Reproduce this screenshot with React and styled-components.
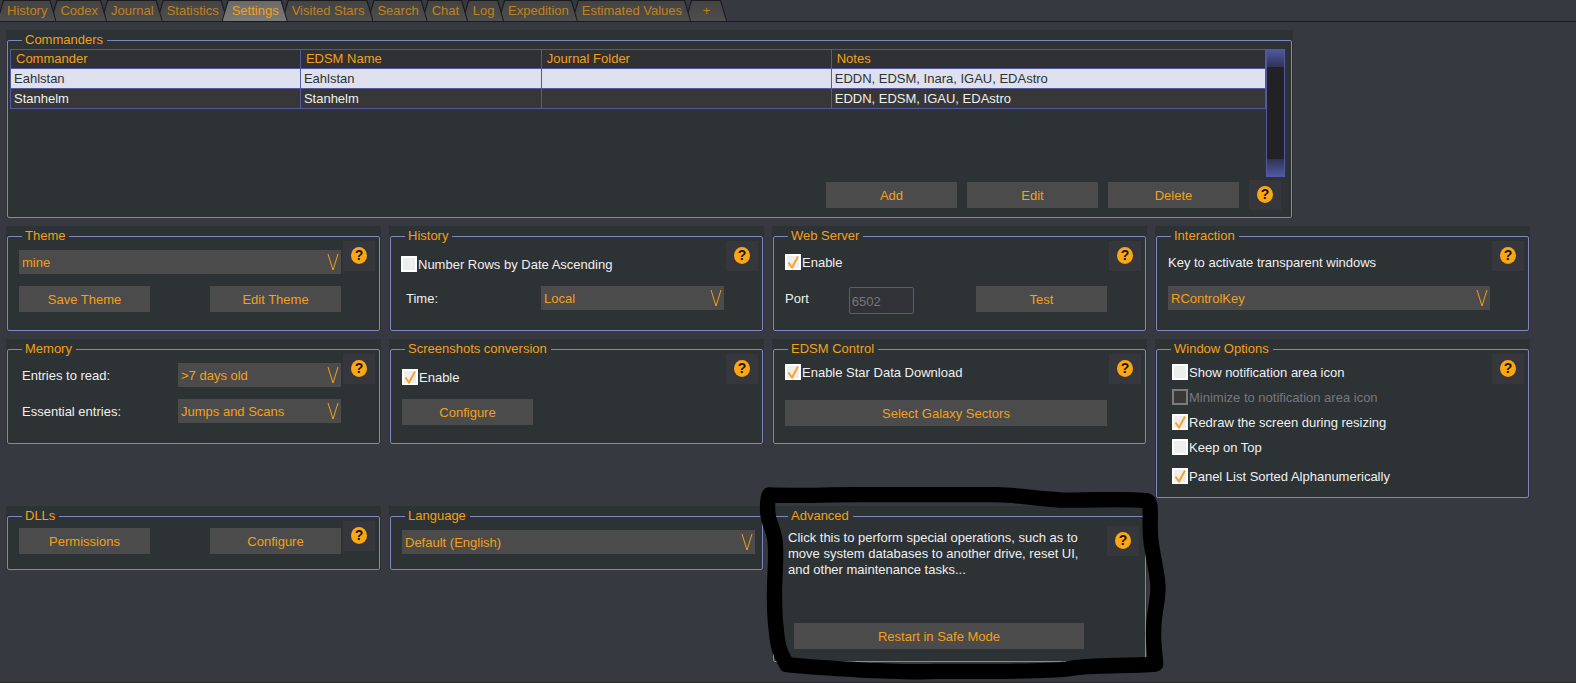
import { useState } from 'react'
import styled, { createGlobalStyle, css } from 'styled-components'

const Colors = {
    page: '#373940',
    panel: '#2d3235',
    line: '#7f87bd',
    grid: '#5359a0',
    button: '#4b4b4b',
    orange: '#f3a018',
    tabText: '#c1811a',
    white: '#f0f0f0',
    disabled: '#78787a',
}

const tabs = ['History', 'Codex', 'Journal', 'Statistics', 'Settings', 'Visited Stars', 'Search', 'Chat', 'Log', 'Expedition', 'Estimated Values', '+']

const commanders = [
    { name: 'Eahlstan', edsm: 'Eahlstan', folder: '', notes: 'EDDN, EDSM, Inara, IGAU, EDAstro' },
    { name: 'Stanhelm', edsm: 'Stanhelm', folder: '', notes: 'EDDN, EDSM, IGAU, EDAstro' },
]

const Help = ({ topic }) => (
    <HelpButton type="button" aria-label={`Help: ${topic}`}>
        <HelpMark>?</HelpMark>
    </HelpButton>
)

const Select = ({ id, label, value, width }) => (
    <SelectBox $width={width}>
        <StyledSelect id={id} aria-label={label} defaultValue={value}>
            <option>{value}</option>
        </StyledSelect>
        <Caret viewBox="0 0 12 18" aria-hidden="true">
            <path d="M1 1 L6 17 L11 1" />
        </Caret>
    </SelectBox>
)

const Check = ({ children, checked = false, disabled = false }) => {
    const [on, setOn] = useState(checked)

    return (
        <CheckLabel $disabled={disabled}>
            <CheckMark>
                <CheckInput type="checkbox" checked={on} disabled={disabled} onChange={() => setOn(!on)} />
                {on && (
                    <Tick viewBox="0 0 16 16" aria-hidden="true">
                        <path d="M3.5 8.5 L7 13.5 L13 2.5" />
                    </Tick>
                )}
            </CheckMark>
            <CheckText>{children}</CheckText>
        </CheckLabel>
    )
}

const Group = ({ title, help = true, top, gap, left, right, bottom, children }) => (
    <Panel>
        <Fieldset>
            <Legend>{title}</Legend>
            <Body>
                <Rows $top={top} $gap={gap} $left={left} $right={right} $bottom={bottom}>{children}</Rows>
                {help && <Help topic={title} />}
            </Body>
        </Fieldset>
    </Panel>
)

const Commanders = () => (
    <CommandersPanel>
        <Fieldset>
            <Legend>Commanders</Legend>
            <ListArea>
                <ListScroll>
                    <Table>
                        <colgroup>
                            <Col $width="23.1%" />
                            <Col $width="19.2%" />
                            <Col $width="23.1%" />
                            <Col />
                        </colgroup>
                        <thead>
                            <tr>
                                <Th>Commander</Th>
                                <Th>EDSM Name</Th>
                                <Th>Journal Folder</Th>
                                <Th>Notes</Th>
                            </tr>
                        </thead>
                        <tbody>
                            {commanders.map((c, i) => (
                                <Tr key={c.name} $selected={i === 0}>
                                    <Td>{c.name}</Td>
                                    <Td>{c.edsm}</Td>
                                    <Td>{c.folder}</Td>
                                    <Td>{c.notes}</Td>
                                </Tr>
                            ))}
                        </tbody>
                    </Table>
                </ListScroll>
                <ScrollBar>
                    <ScrollEnd $up />
                    <ScrollEnd />
                </ScrollBar>
            </ListArea>
            <Actions>
                <Button>Add</Button>
                <Button>Edit</Button>
                <Button>Delete</Button>
                <Help topic="Commanders" />
            </Actions>
        </Fieldset>
    </CommandersPanel>
)

const App = () => {
    const [active, setActive] = useState('Settings')

    return (
        <Page>
            <GlobalStyle />
            <TabStrip role="tablist">
                {tabs.map((name, i) => (
                    <Tab
                        key={name}
                        type="button"
                        role="tab"
                        aria-selected={name === active}
                        $active={name === active}
                        $order={tabs.length - i}
                        onClick={() => setActive(name)}
                    >
                        <span>{name}</span>
                    </Tab>
                ))}
            </TabStrip>

            <Content>
                <Commanders />

                <Groups>
                    <Group title="Theme">
                        <Select label="Theme" value="mine" />
                        <Row>
                            <Button>Save Theme</Button>
                            <Button>Edit Theme</Button>
                        </Row>
                    </Group>

                    <Group title="History" top={11} gap={10} left={10}>
                        <Row $short><Check>Number Rows by Date Ascending</Check></Row>
                        <Row>
                            <Label htmlFor="time" $indent={5}>Time:</Label>
                            <Select id="time" value="Local" width="183px" />
                        </Row>
                    </Group>

                    <Group title="Web Server">
                        <Row $short><Check checked>Enable</Check></Row>
                        <Row>
                            <PortField>
                                <Label htmlFor="port">Port</Label>
                                <PortInput id="port" defaultValue="6502" disabled />
                            </PortField>
                            <Button>Test</Button>
                        </Row>
                    </Group>

                    <Group title="Interaction">
                        <Row $short><Label htmlFor="key">Key to activate transparent windows</Label></Row>
                        <Row><Select id="key" value="RControlKey" /></Row>
                    </Group>

                    <Group title="Memory">
                        <Row $short>
                            <Label htmlFor="entries" $indent={3}>Entries to read:</Label>
                            <Select id="entries" value=">7 days old" width="163px" />
                        </Row>
                        <Row>
                            <Label htmlFor="essential" $indent={3}>Essential entries:</Label>
                            <Select id="essential" value="Jumps and Scans" width="163px" />
                        </Row>
                    </Group>

                    <Group title="Screenshots conversion" top={11} gap={10}>
                        <Row $short><Check checked>Enable</Check></Row>
                        <Row><Button>Configure</Button></Row>
                    </Group>

                    <Group title="EDSM Control" top={6} gap={16} bottom={17}>
                        <Row $short><Check checked>Enable Star Data Download</Check></Row>
                        <Button $wide>Select Galaxy Sectors</Button>
                    </Group>

                    <Group title="Window Options" top={10} gap={9} left={15} bottom={13}>
                        <Check>Show notification area icon</Check>
                        <Check disabled>Minimize to notification area icon</Check>
                        <Check checked>Redraw the screen during resizing</Check>
                        <Check>Keep on Top</Check>
                        <LastCheck><Check checked>Panel List Sorted Alphanumerically</Check></LastCheck>
                    </Group>

                    <Group title="DLLs" top={7} bottom={15}>
                        <Row>
                            <Button>Permissions</Button>
                            <Button>Configure</Button>
                        </Row>
                    </Group>

                    <Group title="Language" help={false} right={3} bottom={15}>
                        <Select label="Language" value="Default (English)" />
                    </Group>

                    <Marked>
                        <Panel>
                            <Fieldset>
                                <Legend>Advanced</Legend>
                                <Advanced>
                                    <Intro>
                                        Click this to perform special operations, such as to<br />
                                        move system databases to another drive, reset UI,<br />
                                        and other maintenance tasks...
                                    </Intro>
                                    <Help topic="Advanced" />
                                </Advanced>
                                <Restart><Button $wide>Restart in Safe Mode</Button></Restart>
                            </Fieldset>
                        </Panel>
                        <Marker viewBox="0 0 1320 639" preserveAspectRatio="none" aria-hidden="true">
                            <path d="M58 75 C140 79 240 73 350 74 L740 74 C800 75 850 85 930 90 C1020 92 1110 84 1190 92 C1206 96 1199 130 1201 190 C1204 250 1222 300 1224 350 C1224 400 1211 430 1211 480 C1209 520 1216 560 1217 582 C1130 590 1030 582 950 597 C880 606 650 604 560 604 C480 608 420 602 350 601 C270 596 180 592 110 584 C96 555 83 540 79 480 C72 430 73 380 74 340 C76 290 80 240 74 205 C68 170 55 160 53 125 C52 100 52 85 58 75 Z" />
                        </Marker>
                    </Marked>
                </Groups>
            </Content>
        </Page>
    )
}

export default App

const GlobalStyle = createGlobalStyle`
    body {
        margin: 0;
        background: ${Colors.page};
    }

    *, *::before, *::after {
        box-sizing: border-box;
    }
`

const Page = styled.div`
    min-height: 100vh;
    overflow: hidden;
    background: ${Colors.page};
    border-bottom: 1px solid #29292e;
    color: ${Colors.white};
    font-family: 'Liberation Sans', Arial, sans-serif;
    font-size: 13px;
    line-height: 16px;

    button, input, select {
        font: inherit;
    }
`

const TabStrip = styled.div`
    display: flex;
    height: 22px;
    padding-left: 3px;
    border-bottom: 1px solid #1b1b1d;
`

const Tab = styled.button`
    position: relative;
    z-index: ${({ $active, $order }) => $active ? 20 : $order};
    isolation: isolate;
    min-width: 42px;
    height: 21px;
    margin-left: -6px;
    padding: 0 9px 0 10px;
    border: 0;
    background: #1b1b1d;
    clip-path: polygon(6px 0, calc(100% - 6px) 0, 100% 100%, 0 100%);
    color: ${({ $active }) => $active ? Colors.orange : Colors.tabText};
    white-space: nowrap;
    cursor: pointer;

    &::before {
        content: '';
        position: absolute;
        inset: 1px 1px 0;
        z-index: -1;
        background: ${({ $active }) => $active ? 'linear-gradient(#6a6a6a, #797979)' : 'linear-gradient(#444445, #4e4e4e)'};
        clip-path: polygon(6px 0, calc(100% - 6px) 0, 100% 100%, 0 100%);
    }
`

const Content = styled.main`
    display: flex;
    flex-direction: column;
    gap: 8px;
    padding: 8px 46px 0 6px;
`

const Groups = styled.div`
    display: grid;
    grid-template-columns: repeat(4, minmax(0, 1fr));
    align-items: start;
    gap: 8px;
`

const Panel = styled.section`
    padding: 5px 1px 0;
    background: ${Colors.panel};
`

const CommandersPanel = styled(Panel)`
    margin-right: 237px;
`

const Fieldset = styled.fieldset`
    min-width: 0;
    margin: 0;
    padding: 0;
    border: 1px solid ${Colors.line};
    border-radius: 2px;
`

/* shorter than its text, so that the body starts right under the line */
const Legend = styled.legend`
    height: 10px;
    margin-left: 14px;
    padding: 0 4px 0 3px;
    line-height: 10px;
    color: ${Colors.orange};
`

const Body = styled.div`
    display: flex;
    align-items: flex-start;
    gap: 2px;
    padding-right: 4px;
`

const Rows = styled.div`
    display: flex;
    flex: 1;
    flex-direction: column;
    gap: ${({ $gap = 12 }) => $gap}px;
    min-width: 0;
    padding: ${({ $top = 9 }) => $top}px ${({ $right = 0 }) => $right}px ${({ $bottom = 18 }) => $bottom}px ${({ $left = 11 }) => $left}px;
`

const Row = styled.div`
    display: flex;
    align-items: flex-start;
    justify-content: space-between;
    height: ${({ $short }) => $short ? 24 : 26}px;
`

const Label = styled.label`
    padding: 1px 0 0 ${({ $indent = 0 }) => $indent}px;
    line-height: 24px;
`

const Button = styled.button.attrs({ type: 'button' })`
    width: ${({ $wide }) => $wide ? '100%' : '131px'};
    height: 26px;
    padding: 2px 0 0;
    border: 0;
    background: ${Colors.button};
    color: ${Colors.orange};
    cursor: pointer;

    &:hover {
        background: #5a5a5a;
    }
`

const HelpButton = styled.button`
    display: flex;
    flex: none;
    align-items: center;
    justify-content: center;
    width: 32px;
    height: 30px;
    padding: 0 0 2px;
    border: 0;
    background: #35373d;
    cursor: pointer;
`

const HelpMark = styled.span`
    width: 16px;
    height: 17px;
    border-radius: 50%;
    background: #fba713;
    color: #17120a;
    font-size: 14px;
    font-weight: bold;
    line-height: 17px;
    text-align: center;
`

const SelectBox = styled.div`
    display: grid;
    width: ${({ $width }) => $width || '100%'};
    height: 24px;
`

const StyledSelect = styled.select`
    grid-area: 1 / 1;
    width: 100%;
    height: 24px;
    padding: 2px 20px 0 3px;
    border: 0;
    border-radius: 0;
    appearance: none;
    background: ${Colors.button};
    color: ${Colors.orange};
`

const Caret = styled.svg`
    grid-area: 1 / 1;
    place-self: center end;
    width: 12px;
    height: 18px;
    margin-right: 2px;
    fill: none;
    stroke: ${Colors.orange};
    stroke-width: 1;
    pointer-events: none;
`

const CheckLabel = styled.label`
    display: flex;
    align-items: center;
    align-self: center;
    gap: 1px;
    width: 100%;
    color: ${({ $disabled }) => $disabled ? Colors.disabled : Colors.white};
`

const CheckText = styled.span`
    margin: 1px 0 -1px;
`

const CheckMark = styled.span`
    display: grid;
    width: 16px;
    height: 16px;
`

const CheckInput = styled.input`
    grid-area: 1 / 1;
    width: 16px;
    height: 16px;
    margin: 0;
    border: 2px solid #fff;
    appearance: none;
    background: #eee;

    ${({ disabled }) => disabled && css`
        border-color: #7c7c7c;
        background: #383838;
    `}
`

const Tick = styled.svg`
    grid-area: 1 / 1;
    fill: none;
    stroke: #f5a62c;
    stroke-width: 2;
    pointer-events: none;
`

const PortField = styled.div`
    display: flex;
    gap: 40px;
`

const PortInput = styled.input`
    width: 65px;
    height: 27px;
    margin-top: 1px;
    padding: 1px 2px 0;
    border: 1px solid ${Colors.grid};
    border-radius: 2px;
    background: #313238;
    color: ${Colors.disabled};
`

const LastCheck = styled.div`
    padding-top: 4px;
`

const ListArea = styled.div`
    display: flex;
    height: 132px;
    padding: 4px 6px 0 2px;
`

const ListScroll = styled.div`
    flex: 1;
    min-width: 0;
`

const Table = styled.table`
    width: 100%;
    table-layout: fixed;
    border-collapse: collapse;
    line-height: 18px;
    text-align: left;
`

const Col = styled.col`
    width: ${({ $width }) => $width || 'auto'};
`

const Th = styled.th`
    height: 19px;
    padding: 0 5px;
    border: 1px solid ${Colors.grid};
    background: #303134;
    color: ${Colors.orange};
    font-weight: normal;
`

const Tr = styled.tr`
    background: ${({ $selected }) => $selected ? '#dee1ed' : '#373737'};
    color: ${({ $selected }) => $selected ? '#2d3134' : Colors.white};
`

const Td = styled.td`
    height: 20px;
    padding: 0 3px;
    border: 1px solid ${Colors.grid};
`

const ScrollBar = styled.div`
    display: flex;
    flex-direction: column;
    justify-content: space-between;
    width: 19px;
    border: 1px solid ${Colors.grid};
    background: #222224;
`

const ScrollEnd = styled.div`
    height: 17px;
    background: linear-gradient(${({ $up }) => $up ? 'to bottom' : 'to top'}, #5058a2, #2f3252);
`

const Actions = styled.div`
    display: flex;
    align-items: center;
    justify-content: flex-end;
    gap: 10px;
    padding: 3px 10px 7px;
`

const Marked = styled.div`
    position: relative;
`

/* freehand ring, drawn over the Advanced panel and its neighbours */
const Marker = styled.svg`
    position: absolute;
    top: -36px;
    left: -22px;
    width: calc(100% + 65px);
    height: 213px;
    fill: none;
    stroke: #000;
    stroke-width: 46;
    stroke-linejoin: round;
    pointer-events: none;
`

const Advanced = styled.div`
    display: flex;
    align-items: flex-start;
    justify-content: space-between;
    padding: 5px 6px 0 14px;
`

const Intro = styled.p`
    margin: 4px 0 0;
    white-space: nowrap;
`

const Restart = styled.div`
    padding: 45px 61px 12px 20px;
`
